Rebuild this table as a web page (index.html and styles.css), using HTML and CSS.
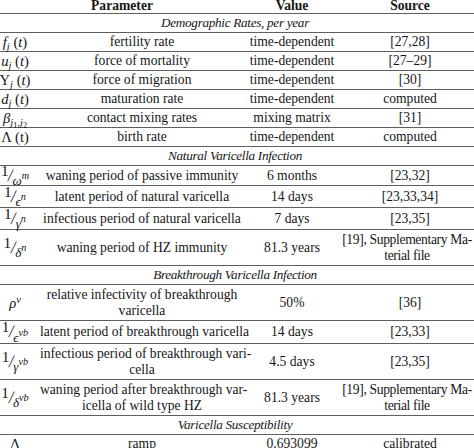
FILE: index.html
```html
<!DOCTYPE html>
<html>
<head>
<meta charset="utf-8">
<link rel="stylesheet" href="styles.css">
</head>
<body>
<table class="params">
  <colgroup>
    <col class="c-sym">
    <col class="c-par">
    <col class="c-val">
    <col class="c-src">
  </colgroup>
  <thead>
    <tr class="head">
      <th colspan="2" class="h-par">Parameter</th>
      <th>Value</th>
      <th>Source</th>
    </tr>
  </thead>
  <tbody>
    <tr class="section"><td colspan="4">Demographic Rates, per year</td></tr>
    <tr>
      <td class="sym"><i>f</i><sub><i>j</i></sub> (<i>t</i>)</td>
      <td>fertility rate</td><td>time-dependent</td><td>[27,28]</td>
    </tr>
    <tr>
      <td class="sym"><i>u</i><sub><i>j</i></sub> (<i>t</i>)</td>
      <td>force of mortality</td><td>time-dependent</td><td>[27–29]</td>
    </tr>
    <tr>
      <td class="sym">Υ<sub><i>j</i></sub> (<i>t</i>)</td>
      <td>force of migration</td><td>time-dependent</td><td>[30]</td>
    </tr>
    <tr>
      <td class="sym"><i>d</i><sub><i>j</i></sub> (<i>t</i>)</td>
      <td>maturation rate</td><td>time-dependent</td><td>computed</td>
    </tr>
    <tr>
      <td class="sym"><i>β</i><sub><i>j</i><sub>1</sub>,<i>j</i><sub>2</sub></sub></td>
      <td>contact mixing rates</td><td>mixing matrix</td><td>[31]</td>
    </tr>
    <tr>
      <td class="sym">Λ (t)</td>
      <td>birth rate</td><td>time-dependent</td><td>computed</td>
    </tr>

    <tr class="section"><td colspan="4">Natural Varicella Infection</td></tr>
    <tr class="r20">
      <td class="sym"><span class="fn">1</span><span class="fs">/</span><span class="fd"><i>ω</i><sup><i>m</i></sup></span></td>
      <td>waning period of passive immunity</td><td>6 months</td><td>[23,32]</td>
    </tr>
    <tr class="r22">
      <td class="sym"><span class="fn">1</span><span class="fs">/</span><span class="fd"><i>ϵ</i><sup><i>n</i></sup></span></td>
      <td>latent period of natural varicella</td><td>14 days</td><td>[23,33,34]</td>
    </tr>
    <tr class="r22">
      <td class="sym"><span class="fn">1</span><span class="fs">/</span><span class="fd"><i>γ</i><sup><i>n</i></sup></span></td>
      <td>infectious period of natural varicella</td><td>7 days</td><td>[23,35]</td>
    </tr>
    <tr class="r36">
      <td class="sym"><span class="fn">1</span><span class="fs">/</span><span class="fd"><i>δ</i><sup><i>n</i></sup></span></td>
      <td>waning period of HZ immunity</td><td>81.3 years</td><td class="tight">[19], Supplementary Ma-<br>terial file</td>
    </tr>

    <tr class="section"><td colspan="4">Breakthrough Varicella Infection</td></tr>
    <tr class="r36">
      <td class="sym"><i>ρ</i><sup><i>v</i></sup></td>
      <td>relative infectivity of breakthrough<br>varicella</td><td>50%</td><td>[36]</td>
    </tr>
    <tr class="r23">
      <td class="sym"><span class="fn">1</span><span class="fs">/</span><span class="fd"><i>ϵ</i><sup><i>vb</i></sup></span></td>
      <td>latent period of breakthrough varicella</td><td>14 days</td><td>[23,33]</td>
    </tr>
    <tr class="r36">
      <td class="sym"><span class="fn">1</span><span class="fs">/</span><span class="fd"><i>γ</i><sup><i>vb</i></sup></span></td>
      <td>infectious period of breakthrough vari-<br>cella</td><td>4.5 days</td><td>[23,35]</td>
    </tr>
    <tr class="r36">
      <td class="sym"><span class="fn">1</span><span class="fs">/</span><span class="fd"><i>δ</i><sup><i>vb</i></sup></span></td>
      <td>waning period after breakthrough var-<br>icella of wild type HZ</td><td>81.3 years</td><td class="tight">[19], Supplementary Ma-<br>terial file</td>
    </tr>

    <tr class="section"><td colspan="4">Varicella Susceptibility</td></tr>
    <tr>
      <td class="sym">Δ</td>
      <td>ramp</td><td>0.693099</td><td>calibrated</td>
    </tr>
  </tbody>
</table>
</body>
</html>
```

FILE: styles.css
```css
html, body {
  margin: 0;
  padding: 0;
  background: #ffffff;
  overflow: hidden;
}

body {
  width: 474px;
  height: 448px;
  font-family: "Liberation Serif", "Times New Roman", serif;
  font-size: 13.6px;
  color: #161616;
}

.params {
  table-layout: fixed;
  width: 490px;
  margin-top: -2px;
  margin-left: -10px;
  border-collapse: separate;
  border-spacing: 0;
}

.c-sym { width: 50px; }
.c-par { width: 204px; }
.c-val { width: 96px; }
.c-src { width: 140px; }

.params th,
.params td {
  padding: 1px 0;
  line-height: 16px;
  text-align: center;
  vertical-align: middle;
  white-space: nowrap;
  border-bottom: 1px solid #5f5f5f;
}

.params th {
  font-weight: bold;
  padding: 0;
  line-height: 15px;
}

.params .h-par {
  padding-left: 10px;
}

.params .tight {
  letter-spacing: -0.35px;
  padding-right: 6px;
}

.section td {
  font-style: italic;
  font-size: 13.2px;
  letter-spacing: -0.3px;
}

.r20 td { padding-top: 1.5px; padding-bottom: 1.5px; }
.r22 td { padding-top: 2.5px; padding-bottom: 2.5px; }
.r23 td { padding-top: 3px; padding-bottom: 3px; }
.r36 td { padding-top: 1.5px; padding-bottom: 1.5px; }

sub, sup {
  line-height: 0;
  font-size: 0.72em;
}

sub { vertical-align: -0.3em; }
sup { vertical-align: 0.45em; }

sub sub {
  font-size: 0.8em;
  vertical-align: -0.25em;
}

.params .sym {
  font-size: 14.6px;
}

.fn {
  display: inline-block;
  line-height: 0;
  vertical-align: 0.34em;
  font-size: 1.05em;
}

.fs {
  display: inline-block;
  line-height: 0;
  font-size: 1.2em;
  transform: skewX(-8deg);
  margin: 0 -0.5px;
}

.fd {
  display: inline-block;
  line-height: 0;
  vertical-align: -0.32em;
  font-size: 0.9em;
}

.fd sup {
  font-size: 0.78em;
  vertical-align: 0.55em;
}
```
